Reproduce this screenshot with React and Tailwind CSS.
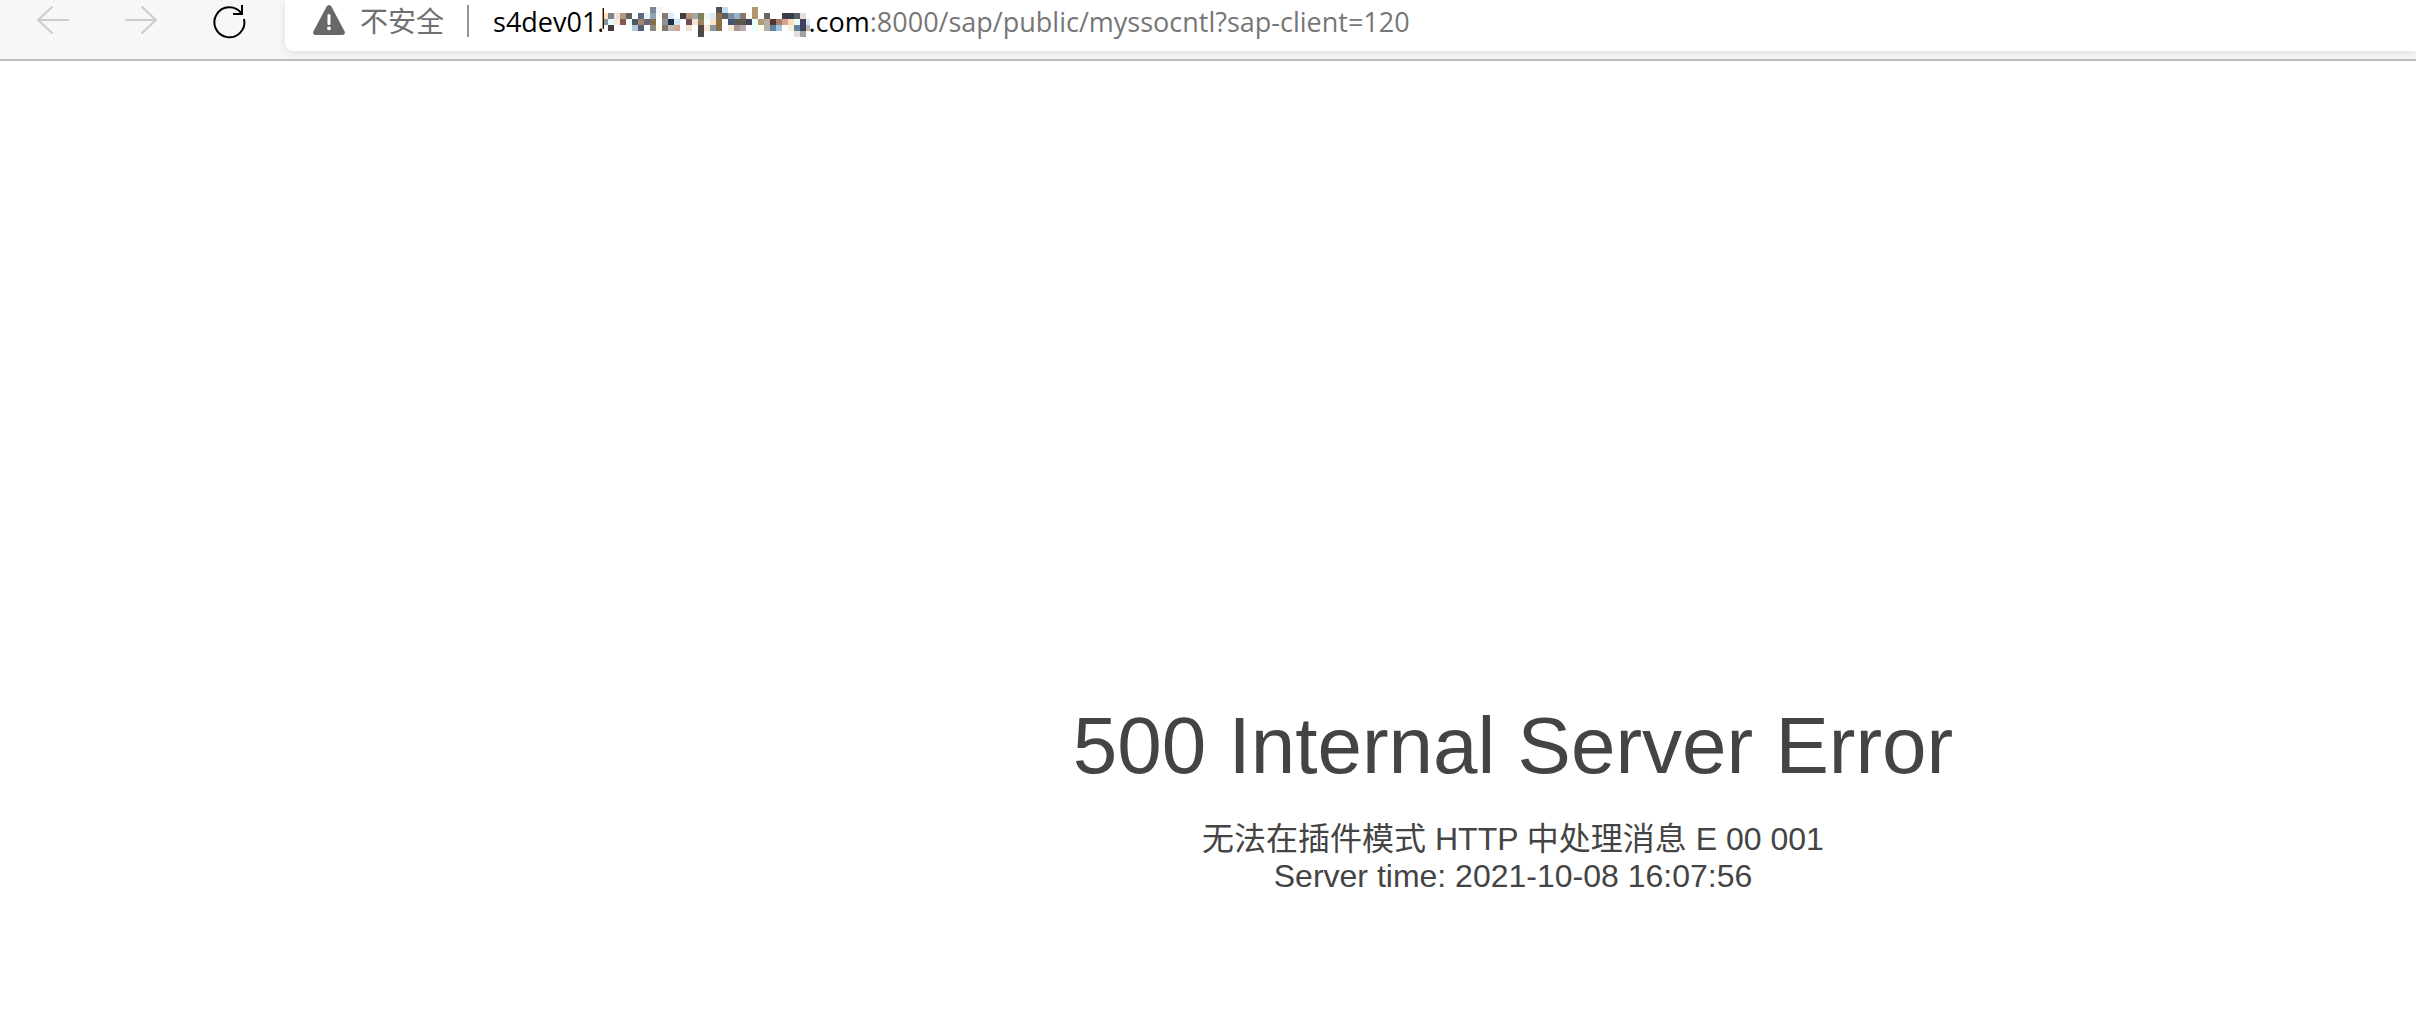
// Pixelated part of the host name, one entry per 6px cell ('' = empty)
const MOSAIC_ROWS = [
  ',,,,,,,,7f8796,f0f5fa,,,,,,,,,,4f504f,c0dff5,,,,,b09770',
  'fbe0c3,7f8583,e8e0d9,b39878,5d635f,,5a6b80,e8f2fa,94a3b3,fdfdfd,86796f,ddeaf6,,443b40,b29770,a0a8a9,7d8058,f5f5ee,d9ecf9,8a6d4c,5a605f,7d8f9d,98b1c4,86786e,fcfcfc,b09770,,6a6564,,,423b44,2f3d4c,5b5f60,e6ddd8',
  '8496a8,e8f8ff,fbe9d7,7f5a56,f4fbff,4e5a66,a58371,666678,8a6d4b,,8a929a,1d2e47,cfe5fa,,714d59,f0e2d8,9b8060,f9ffff,fbe0c3,8a6d4b,,41547f,58564f,5c5849,40405a,e8fffb,b09870,b5ada8,57352f,a37f63,d3a795,fcdcb5,e8fbfb,443f58,dbe8fb',
  'fbfdff,493a3c,,,,b3cbe0,565e6c,,8a8780,fffce8,80776e,bcbcbc,d6a594,,efe0d2,,504843,fbe8d4,8c96a0,8a6d4b,,fbe8d2,a89890,b8a9b2,,e8fffb,fffce8,b5ada8,5f82a0,a0c3e3,,f5f0dc,5f82a0,3a4358,b8b4b0',
  ',,,,,,,,,,,,,,,,504843,,,,,,,,,,,,,,,,e6ddd8,a5a2a0',
].map((row) => row.split(','));

function HostMosaic() {
  return (
    <svg className="w-[208px] h-[30px] -mx-0.5 shrink-0" viewBox="0 0 208 30" shapeRendering="crispEdges" aria-hidden="true">
      {MOSAIC_ROWS.map((row, y) =>
        row.map((color, x) =>
          color ? <rect key={`${x}-${y}`} x={x * 6} y={y * 6} width="6" height="6" fill={`#${color}`} /> : null
        )
      )}
      <rect x="0" y="1" width="1" height="21" fill="#e0963c" />
      <rect x="1" y="1" width="1" height="21" fill="#0a0f28" />
    </svg>
  );
}

function BackIcon() {
  return (
    <svg className="w-8 h-8" viewBox="0 0 32 32" fill="none" stroke="currentColor" strokeWidth="2" strokeLinecap="round" strokeLinejoin="round">
      <path d="M15 3 L1 16 L15 29 M1 16 H31" />
    </svg>
  );
}

function ForwardIcon() {
  return (
    <svg className="w-8 h-8" viewBox="0 0 32 32" fill="none" stroke="currentColor" strokeWidth="2" strokeLinecap="round" strokeLinejoin="round">
      <path d="M17 3 L31 16 L17 29 M31 16 H1" />
    </svg>
  );
}

function ReloadIcon() {
  return (
    <svg className="w-8 h-8 overflow-visible" viewBox="0 0 32 32" fill="none" stroke="currentColor" strokeWidth="2">
      <path d="M31 15 A15 15 0 1 1 28.5 9.5" />
      <path d="M29 1 V10 H20" />
    </svg>
  );
}

function WarningIcon() {
  return (
    <svg className="w-8 h-[30px]" viewBox="0 0 32 30">
      <path
        d="M13.6 1.6 Q16 -1.6 18.4 1.6 L31.5 26.2 Q32.8 30 29.4 30 H2.6 Q-0.8 30 0.5 26.2 Z"
        fill="#686868"
      />
      <path d="M16 10.5 V18.5" stroke="#fff" strokeWidth="3" strokeLinecap="round" />
      <circle cx="16" cy="23.3" r="1.9" fill="#fff" />
    </svg>
  );
}

function NavButton({ label, disabled, children }) {
  return (
    <button
      type="button"
      aria-label={label}
      disabled={disabled}
      className="flex w-[88px] h-10 items-center justify-center text-black disabled:text-[#cccccc]"
    >
      {children}
    </button>
  );
}

function AddressBar() {
  return (
    <div className="flex flex-1 h-[51px] items-start ml-3 pl-7 rounded-bl-lg bg-white shadow-[0_2px_8px_rgba(0,0,0,0.1)] text-[28px] leading-10 whitespace-nowrap">
      <button type="button" className="flex h-10 items-center gap-[15px] text-[#707070]">
        <WarningIcon />
        <span className="font-['Noto_Sans_CJK_SC',sans-serif]">不安全</span>
      </button>
      <div className="w-[2px] h-8 mt-[5px] ml-[23px] mr-6 bg-[#949494]" />
      <div
        role="textbox"
        aria-label="Address"
        className="flex items-center h-[43px] font-['Open_Sans',sans-serif] text-[27px] text-[#767676]"
      >
        <span className="text-black">s4dev01.</span>
        <HostMosaic />
        <span className="text-black">.com</span>
        <span>:8000/sap/public/myssocntl?sap-client=120</span>
      </div>
    </div>
  );
}

export default function App() {
  return (
    <div className="min-h-screen bg-white overflow-x-hidden">
      <header className="flex h-[61px] pl-[9px] overflow-hidden border-b-2 border-[#bdbdbd] bg-[#f7f7f7]">
        <NavButton label="Back" disabled>
          <BackIcon />
        </NavButton>
        <NavButton label="Forward" disabled>
          <ForwardIcon />
        </NavButton>
        <NavButton label="Reload">
          <ReloadIcon />
        </NavButton>
        <AddressBar />
      </header>

      <main className="pl-[610px] pt-[639px] text-center text-[#444444] font-['Liberation_Sans','Noto_Sans_CJK_SC',sans-serif]">
        <h1 className="text-[80px] leading-[92px]">500 Internal Server Error</h1>
        <p className="mt-[29px] text-[32px] leading-[37px]">
          无法在插件模式 HTTP 中处理消息 E 00 001
          <br />
          Server time: 2021-10-08 16:07:56
        </p>
      </main>
    </div>
  );
}
